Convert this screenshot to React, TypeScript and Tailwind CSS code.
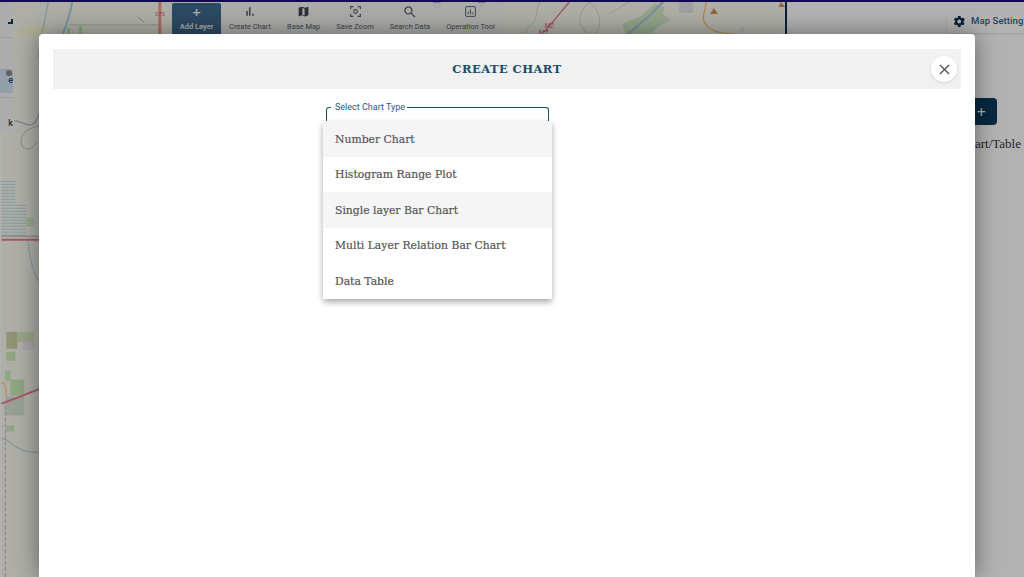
import type { ReactNode } from "react";

const items = [
  { label: "Number Chart", active: true },
  { label: "Histogram Range Plot", active: false },
  { label: "Single layer Bar Chart", active: true },
  { label: "Multi Layer Relation Bar Chart", active: false },
  { label: "Data Table", active: false },
];

const hatch = [0, 1, 2, 3, 4, 5, 6, 7, 8, 9, 10, 11, 12, 13, 14, 15, 16, 17, 18];

function MapDrawing() {
  return (
    <svg className="absolute inset-0 h-full w-full" viewBox="0 0 785 577" fill="none">
      <rect width="785" height="577" fill="#fafaf0" />
      {/* left strip: top */}
      <rect x="16" y="25" width="30" height="9" fill="#fbfbd8" />
      <path d="M47 0 C44 18 39 34 37 56" stroke="#bcdce6" strokeWidth="1.4" />
      <path d="M71 0 C69 14 65 24 61 34" stroke="#a5d6e8" strokeWidth="2" />
      <path d="M68 23 H158" stroke="#d0d0c8" strokeWidth="1" />
      <rect x="78" y="24" width="3" height="9" fill="#c4ecb8" />
      <rect x="66" y="26" width="3" height="8" fill="#c4ecb8" />
      <path d="M137 15 L143 20" stroke="#b0b0b0" strokeWidth="1" />
      <path d="M159 0 V34" stroke="#f49a86" strokeWidth="3" />
      <text x="154" y="14" fontSize="6" fill="#e0606c" fontFamily="Liberation Sans">379</text>
      {/* left strip: upper river */}
      <path d="M13 119 C22 120 26 126 33 122 C37 118 36 114 39 110" stroke="#a8bed8" strokeWidth="1.2" />
      <path d="M39 124 C28 126 18 132 20 142 C22 150 30 150 36 140" stroke="#c0c4c0" strokeWidth="1" />
      {/* hatched field */}
      {hatch.map((i) => (
        <path key={i} d={`M0 ${180 + i * 3} H${i < 8 ? 14 : 25}`} stroke="#bcdfe8" strokeWidth="1" />
      ))}
      <rect x="25" y="216" width="8" height="9" fill="#daf0c8" />
      <path d="M0 235 H39" stroke="#b0b0b0" strokeWidth="1" />
      <path d="M0 238.5 H39" stroke="#ec7c98" strokeWidth="2" />
      <path d="M27 240 C28 258 32 272 39 284" stroke="#b8dee8" strokeWidth="1.2" />
      {/* parcels */}
      <rect x="5" y="331" width="11" height="17" fill="#d2d2a8" />
      <rect x="16" y="331" width="17" height="10" fill="#dcecc0" />
      <rect x="22" y="341" width="11" height="8" fill="#eee8f0" />
      <rect x="5" y="351" width="9" height="9" fill="#caecba" />
      <rect x="4" y="370" width="5" height="10" fill="#caecba" />
      <rect x="9" y="379" width="14" height="16" fill="#caecba" />
      <rect x="4" y="396" width="19" height="19" fill="#d8e4d8" />
      <rect x="5" y="425" width="8" height="6" fill="#caecba" />
      <path d="M0 382 H1 C4 382 5 388 5 396" stroke="#f8cc88" strokeWidth="1.2" />
      <path d="M0 403 C15 398 28 392 39 388" stroke="#ec7c98" strokeWidth="2" />
      <path d="M4 405 V577" stroke="#cdb6d6" strokeWidth="1" strokeDasharray="4 2" />
      <path d="M0 438 C8 438 10 446 22 450 C28 452 34 452 39 452" stroke="#b8dee8" strokeWidth="1.3" />
      {/* top band, behind the toolbar */}
      <circle cx="437" cy="2" r="4" fill="#b4b4ec" />
      <circle cx="482" cy="1" r="4" fill="#b4b4ec" />
      {/* top band, right of the toolbar */}
      <path d="M570 0 L545 30" stroke="#ec7c98" strokeWidth="1.5" />
      <text x="545" y="26" fontSize="7" fontStyle="italic" fill="#dc5c74" fontFamily="Liberation Sans">M2</text>
      <text x="539" y="33" fontSize="7" fontStyle="italic" fill="#dc5c74" fontFamily="Liberation Sans">M7</text>
      <path d="M540 0 C535 10 540 18 528 26 L525 34" stroke="#d8d8cc" strokeWidth="1" />
      <path d="M590 0 C580 10 575 20 590 34 M590 0 C600 8 605 20 595 34 M610 12 L630 0" stroke="#d8d8cc" strokeWidth="1" />
      <path d="M623 22 L642 14 L655 2 L665 5 L664 12 L672 18 L660 24 L650 33 L627 34 Z" fill="#d4ecc8" />
      <path d="M628 33 L650 14 L664 0" stroke="#b4cede" strokeWidth="2.5" />
      <rect x="680" y="0" width="14" height="11" fill="#e6e6ea" />
      <path d="M707 0 C708 8 700 16 708 24 C714 30 722 32 745 33" stroke="#f8c068" strokeWidth="1.2" />
      <path d="M715 6 L719 12 H711 Z" fill="#d09058" />
      <path d="M782 0 L787 5 H780 Z" fill="#d09058" />
      <path d="M742 24 C745 26 745 28 742 30" stroke="#b8dee8" strokeWidth="1" />
    </svg>
  );
}

function Tool({ label, icon, active }: { label: string; icon: ReactNode; active?: boolean }) {
  return (
    <div className={`flex h-full flex-col items-center justify-end pb-[2px] ${active ? "w-[49px] rounded-t-[2px] bg-[#3f6a8f] font-medium text-white" : "px-[8px] text-[#56666e]"}`}>
      <span className="flex h-[15px] items-center">{icon}</span>
      <span className="mt-[3px] font-['Roboto',sans-serif] text-[7.5px] leading-[10px] whitespace-nowrap">{label}</span>
    </div>
  );
}

function LeftPanel() {
  return (
    <div className="relative flex h-[131px] w-[13px] flex-col bg-[#f6f6f6]">
      <div className="flex h-[36px] shrink-0 items-center justify-end border-b border-[#e2e2e2] pt-[3px]">
        <span className="h-[5px] w-[5px] border-r-2 border-b-2 border-[#0b3b5c]" />
      </div>
      <div className="flex h-[60px] shrink-0 flex-col justify-end border-b border-[#e2e2e2] pb-[4px]">
        <div className="relative flex h-[24px] items-center justify-end rounded-r-[2px] bg-[#d2e4f4] font-['Roboto',sans-serif] text-[9px] font-medium text-[#264d73]">
          e
          <span className="absolute top-[1px] right-[1px] h-[6px] w-[6px] rounded-full bg-[#8a8a8a]" />
        </div>
      </div>
      <div className="flex flex-1 items-center justify-end pt-[16px] font-['Roboto',sans-serif] text-[9px] font-medium text-[#444]">k</div>
    </div>
  );
}

function Toolbar() {
  return (
    <div className="ml-[159px] flex h-[31px] items-stretch bg-[#f4f4f2]/90">
      <Tool active label="Add Layer" icon={<span className="pt-[2px] text-[15px] leading-none">+</span>} />
      <Tool label="Create Chart" icon={<svg width="13" height="13" viewBox="0 0 24 24" fill="currentColor"><path d="M6 11h3v9H6zM11 4h3v16h-3zM17 16h3v4h-3z" /></svg>} />
      <Tool label="Base Map" icon={<svg width="13" height="13" viewBox="0 0 24 24" fill="#3c4a50"><path d="M3 5l6-2 6 2 6-2v16l-6 2-6-2-6 2V5zm7 .5v12.6l4 1.4V6.9l-4-1.4z" /></svg>} />
      <Tool label="Save Zoom" icon={<svg width="13" height="13" viewBox="0 0 24 24" fill="none" stroke="currentColor" strokeWidth="2"><path d="M3 8V3h5M16 3h5v5M21 16v5h-5M8 21H3v-5" /><circle cx="12" cy="12" r="3.5" /></svg>} />
      <Tool label="Search Data" icon={<svg width="13" height="13" viewBox="0 0 24 24" fill="none" stroke="currentColor" strokeWidth="2.4"><circle cx="10" cy="10" r="6.5" /><path d="M15 15l7 7" /></svg>} />
      <Tool label="Operation Tool" icon={<svg width="13" height="13" viewBox="0 0 24 24" fill="none" stroke="currentColor" strokeWidth="1.8"><rect x="3" y="3" width="18" height="18" rx="1" /><path d="M8 17v-5M12 17V8M16 17v-3" /></svg>} />
    </div>
  );
}

function RightPanel() {
  return (
    <div className="flex w-[239px] shrink-0 flex-col items-end border-l-2 border-[#0a3050] bg-white pt-[8px]">
      <div className="flex h-[23px] w-[77px] items-center gap-[5px] overflow-hidden rounded-l-[3px] bg-white pl-[6px] font-['Roboto',sans-serif] text-[9.5px] font-medium tracking-[0.1px] whitespace-nowrap text-[#3a5f82] shadow">
        <svg className="shrink-0" width="13" height="13" viewBox="0 0 24 24" fill="#0f2f4f"><path d="M19.4 13a7.8 7.8 0 0 0 0-2l2.1-1.6a.5.5 0 0 0 .1-.7l-2-3.4a.5.5 0 0 0-.6-.2l-2.5 1a7.3 7.3 0 0 0-1.7-1L14 2.4a.5.5 0 0 0-.5-.4h-4a.5.5 0 0 0-.5.4L8.7 5a7.3 7.3 0 0 0-1.7 1l-2.5-1a.5.5 0 0 0-.6.2l-2 3.4a.5.5 0 0 0 .1.7L4.1 11a7.8 7.8 0 0 0 0 2L2 14.6a.5.5 0 0 0-.1.7l2 3.4c.1.2.4.3.6.2l2.5-1c.5.4 1.1.7 1.7 1l.3 2.7c0 .2.3.4.5.4h4c.2 0 .5-.2.5-.4l.3-2.7c.6-.3 1.2-.6 1.7-1l2.5 1c.2.1.5 0 .6-.2l2-3.4a.5.5 0 0 0-.1-.7L19.4 13zM11.5 15.5a3.5 3.5 0 1 1 0-7 3.5 3.5 0 0 1 0 7z" /></svg>
        Map Setting
      </div>
      <div className="mt-[65px] mr-[27px] flex h-[27px] w-[32px] items-center justify-end rounded-[4px] bg-[#0b3b5c] pr-[11px] text-[16px] leading-none text-white">+</div>
      <div className="mt-[11px] mr-[3px] font-['Liberation_Serif',serif] text-[13px] leading-[15px] whitespace-nowrap text-[#333]">Chart/Table</div>
    </div>
  );
}

function Modal() {
  return (
    <div className="absolute inset-0 flex flex-col bg-black/30 pt-[34px] pl-[39px]">
      <div className="flex w-[936px] flex-1 flex-col rounded-t-[4px] bg-white px-[14px] pt-[15px] shadow-[0_0_24px_rgba(0,0,0,0.45)]">
        <div className="grid h-[40px] shrink-0 grid-cols-[1fr_auto_1fr] items-center bg-[#f1f1f1]">
          <span />
          <span className="pt-[1px] font-['DejaVu_Serif',serif] text-[11.5px] font-bold tracking-[0.45px] text-[#1c4d6b]">CREATE CHART</span>
          <span className="mr-[4px] flex h-[26px] w-[26px] items-center justify-center justify-self-end rounded-full bg-white shadow-sm">
            <svg width="11" height="11" viewBox="0 0 12 12" stroke="#555" strokeWidth="1.5"><path d="M1 1l10 10M11 1L1 11" /></svg>
          </span>
        </div>
        <div className="relative mt-[18px] ml-[273px] h-[30px] w-[223px] rounded-t-[3px] border border-b-0 border-[#1c4d6b]">
          <span className="absolute top-[-6px] left-[4px] bg-white pr-[2px] pl-[4px] font-['Roboto',sans-serif] text-[9px] leading-[11px] text-[#2a5a78]">Select Chart Type</span>
          <div className="absolute top-[13px] left-[-4px] w-[229px] rounded-[3px] bg-white shadow-[0_3px_6px_rgba(0,0,0,0.35)]">
            {items.map((it) => (
              <div key={it.label} className={`flex h-[35.6px] items-center px-[12px] pt-[2px] font-['DejaVu_Serif',serif] text-[10.8px] whitespace-nowrap text-[#555] [-webkit-text-stroke:0.2px_#555] ${it.active ? "bg-[#f5f5f5]" : "bg-white"}`}>
                {it.label}
              </div>
            ))}
          </div>
        </div>
      </div>
    </div>
  );
}

export default function App() {
  return (
    <div className="relative flex h-[577px] w-[1024px] flex-col overflow-hidden bg-white">
      <div className="relative z-10 h-[2px] w-full shrink-0 bg-[#120a50]" />
      <div className="flex min-h-0 flex-1">
        <div className="relative flex-1">
          <MapDrawing />
          <div className="relative flex items-start">
            <LeftPanel />
            <div className="mt-[1px]">
              <Toolbar />
            </div>
          </div>
        </div>
        <RightPanel />
      </div>
      <Modal />
    </div>
  );
}
